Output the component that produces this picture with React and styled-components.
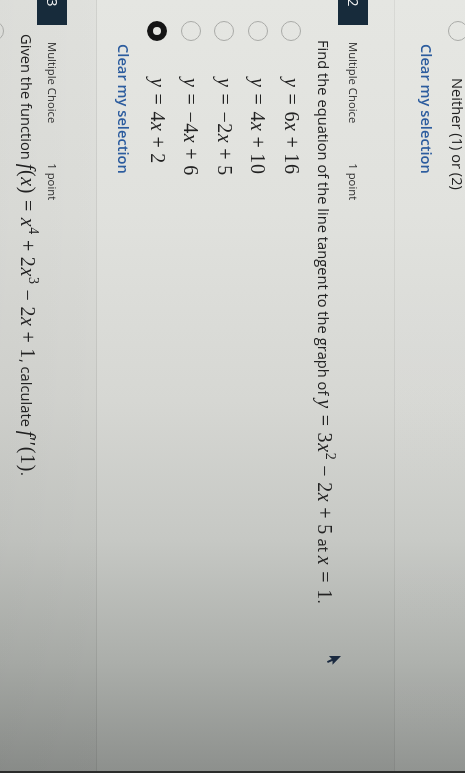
import React from 'react';
import styled, { createGlobalStyle } from 'styled-components';

const GlobalStyle = createGlobalStyle`
  html, body {
    margin: 0;
    padding: 0;
  }
  body {
    width: 465px;
    height: 773px;
    overflow: hidden;
    background: #8f928f;
    font-family: "Open Sans", "Liberation Sans", sans-serif;
  }
`;

// the photo of the monitor, in its own (portrait) frame
const Photo = styled.div`
  width: 465px;
  height: 773px;
  overflow: hidden;
  box-sizing: border-box;
  border-bottom: 2px solid #2b2c2b;
  background:
    linear-gradient(90deg,
      transparent 96px, rgba(0, 0, 0, 0.07) 96px, rgba(0, 0, 0, 0.07) 97px, transparent 97px,
      transparent 394px, rgba(0, 0, 0, 0.06) 394px, rgba(0, 0, 0, 0.06) 395px, transparent 395px),
    linear-gradient(90deg,
      rgba(0, 0, 0, 0.04) 0, rgba(0, 0, 0, 0.025) 97px, rgba(0, 0, 0, 0) 97px,
      rgba(255, 255, 255, 0) 395px, rgba(255, 255, 255, 0.04) 395px),
    linear-gradient(180deg, #e5e6e2 0%, #e0e1dd 28%, #d6d7d3 52%, #c6c8c4 70%, #abaeaa 86%, #8d908d 100%);
`;

// the screen itself, turned a quarter clockwise
const Screen = styled.div`
  position: relative;
  width: 773px;
  height: 465px;
  transform-origin: 0 0;
  transform: translateX(465px) rotate(90deg);
  color: #222;
  filter: blur(0.35px);
  display: flex;
  flex-direction: column;
`;

const Option = styled.div`
  display: flex;
  align-items: center;
  height: 33.5px;
  padding-left: 21px;
  flex-shrink: 0;
  &:first-child {
    margin-top: -10px;
  }
`;

const Radio = styled.span`
  box-sizing: border-box;
  width: 20px;
  height: 20px;
  border-radius: 50%;
  flex-shrink: 0;
  border: ${p => (p.$checked ? '6px solid #151515' : '1.5px solid #a9aaa7')};
`;

const OptionText = styled.span`
  margin-left: 37px;
  font-size: 14.7px;
  white-space: nowrap;
`;

const ClearLink = styled.div`
  margin: ${p => p.$top}px 0 0 44px;
  font-size: 14.7px;
  font-weight: 600;
  line-height: 20px;
  color: #2c5c9e;
`;

const Question = styled.section`
  display: flex;
  flex-direction: column;
  margin-top: ${p => p.$top}px;
`;

const QuestionHead = styled.div`
  display: flex;
  align-items: center;
  height: 30px;
`;

const Badge = styled.div`
  width: 45px;
  height: 30px;
  margin-left: -20px;
  background: #172b3b;
  color: #f2f2f2;
  font-size: 14px;
  display: flex;
  align-items: center;
  justify-content: center;
  flex-shrink: 0;
`;

const Meta = styled.div`
  margin-left: 17px;
  font-size: 11.3px;
  color: #2e2e2e;
  display: flex;
`;

const Points = styled.span`
  margin-left: 40px;
`;

const Prompt = styled.p`
  margin: ${p => p.$top}px 0 5.25px ${p => p.$left}px;
  font-size: 14.7px;
  line-height: 22px;
  white-space: nowrap;
`;

const Math = styled.span`
  font-family: "Liberation Serif", "DejaVu Serif", serif;
  font-size: ${p => p.$size || 20}px;
  letter-spacing: 0.03em;
  white-space: nowrap;
`;

const V = styled.i`
  font-style: italic;
`;

const Op = styled.span`
  margin: 0 ${p => (p.$rel ? '0.3em' : '0.25em')};
`;

const Sup = styled.sup`
  font-size: 0.7em;
  line-height: 0;
  vertical-align: 0.55em;
`;

const Cursor = styled.svg`
  position: absolute;
  left: 656px;
  top: 124px;
  width: 10px;
  height: 15px;
  filter: blur(0.6px);
`;

const answers = [
  <><V>y</V><Op $rel>=</Op>6<V>x</V><Op>+</Op>16</>,
  <><V>y</V><Op $rel>=</Op>4<V>x</V><Op>+</Op>10</>,
  <><V>y</V><Op $rel>=</Op>−2<V>x</V><Op>+</Op>5</>,
  <><V>y</V><Op $rel>=</Op>−4<V>x</V><Op>+</Op>6</>,
  <><V>y</V><Op $rel>=</Op>4<V>x</V><Op>+</Op>2</>,
];

export default function App() {
  const picked = 4;

  return (
    <>
      <GlobalStyle />
      <Photo>
        <Screen>
          <Option>
            <Radio />
            <OptionText>Neither (1) or (2)</OptionText>
          </Option>
          <ClearLink $top={4.5}>Clear my selection</ClearLink>

          <Question $top={48.5}>
            <QuestionHead>
              <Badge>2</Badge>
              <Meta>
                Multiple Choice
                <Points>1 point</Points>
              </Meta>
            </QuestionHead>
            <Prompt $top={2} $left={40}>
              Find the equation of the line tangent to the graph of{' '}
              <Math>
                <V>y</V><Op $rel>=</Op>3<V>x</V><Sup>2</Sup><Op>−</Op>2<V>x</V><Op>+</Op>5
              </Math>{' '}
              at <Math><V>x</V><Op $rel>=</Op>1</Math>.
            </Prompt>
            {answers.map((a, i) => (
              <Option key={i}>
                <Radio $checked={i === picked} />
                <OptionText>
                  <Math>{a}</Math>
                </OptionText>
              </Option>
            ))}
            <ClearLink $top={6.25}>Clear my selection</ClearLink>
          </Question>

          <Question $top={47}>
            <QuestionHead>
              <Badge>3</Badge>
              <Meta>
                Multiple Choice
                <Points>1 point</Points>
              </Meta>
            </QuestionHead>
            <Prompt $top={-2} $left={34}>
              Given the function{' '}
              <Math>
                <V>f</V>(<V>x</V>)<Op $rel>=</Op><V>x</V><Sup>4</Sup><Op>+</Op>2<V>x</V><Sup>3</Sup>
                <Op>−</Op>2<V>x</V><Op>+</Op>1
              </Math>
              , calculate <Math><V>f</V>′′(1)</Math>.
            </Prompt>
            <Option>
              <Radio />
            </Option>
          </Question>

          <Cursor viewBox="0 0 10 15">
            <path d="M0 0 L0 12 L3 9.2 L5.2 14 L7 13.2 L4.9 8.6 L8.8 8.6 Z" fill="#1b2a40" />
          </Cursor>
        </Screen>
      </Photo>
    </>
  );
}
